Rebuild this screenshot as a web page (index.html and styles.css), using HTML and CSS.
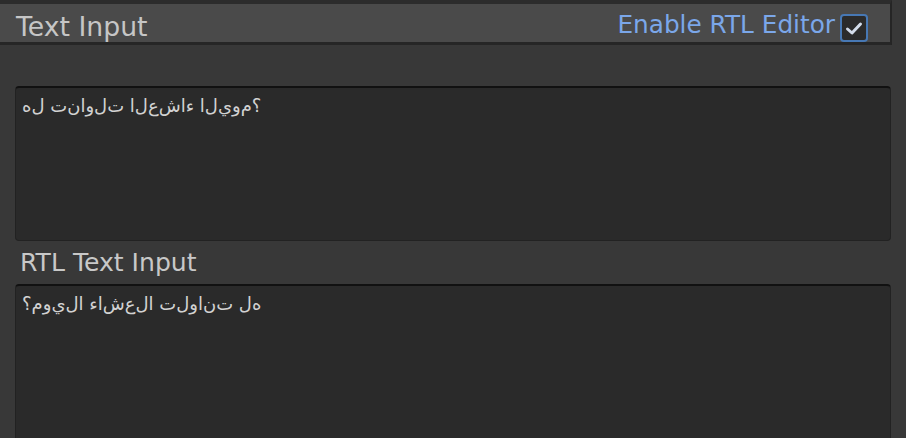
FILE: index.html
```html
<!DOCTYPE html>
<html lang="en">
<head>
<meta charset="utf-8">
<title>Text Input</title>
<link rel="stylesheet" href="styles.css">
</head>
<body>
<div class="panel">
  <header class="header">
    <span class="title">Text Input</span>
    <label class="toggle">
      <span class="toggle-label">Enable RTL Editor</span>
      <span class="checkbox">
        <svg width="18" height="15" viewBox="0 0 18 15"><polyline points="2.5,8 7,12 15.5,3" fill="none" stroke="#d3dcea" stroke-width="3" stroke-linecap="round" stroke-linejoin="round"/></svg>
      </span>
    </label>
  </header>
  <main class="content">
    <div class="field field-first">
      <div class="text ltr-raw">ه&zwnj;ل ت&zwnj;ن&zwnj;ا&zwnj;و&zwnj;ل&zwnj;ت ا&zwnj;ل&zwnj;ع&zwnj;ش&zwnj;ا&zwnj;ء ا&zwnj;ل&zwnj;ي&zwnj;و&zwnj;م&zwnj;؟</div>
    </div>
    <div class="field-label">RTL Text Input</div>
    <div class="field field-second">
      <div class="text ltr-raw">؟&zwnj;م&zwnj;و&zwnj;ي&zwnj;ل&zwnj;ا ء&zwnj;ا&zwnj;ش&zwnj;ع&zwnj;ل&zwnj;ا ت&zwnj;ل&zwnj;و&zwnj;ا&zwnj;ن&zwnj;ت ل&zwnj;ه</div>
    </div>
  </main>
</div>
</body>
</html>
```
FILE: styles.css
```css
html, body {
  margin: 0;
  padding: 0;
}
body {
  background: #383838;
  width: 906px;
  height: 438px;
  overflow: hidden;
  font-family: "DejaVu Sans", "Liberation Sans", sans-serif;
}
.panel {
  display: flex;
  flex-direction: column;
}
.header {
  width: 890px;
  height: 38px;
  background: #4a4a4a;
  border-top: 4px solid #2c2c2c;
  border-right: 2px solid #252525;
  border-bottom: 3px solid #262626;
  display: flex;
  align-items: flex-start;
  justify-content: space-between;
  box-sizing: content-box;
}
.title {
  padding: 8px 0 0 16px;
  font-size: 26.7px;
  line-height: 30px;
  color: #c6c6c6;
}
.toggle {
  display: flex;
  align-items: flex-start;
  gap: 5px;
  padding-right: 22px;
}
.toggle-label {
  padding-top: 6px;
  font-size: 24.75px;
  line-height: 30px;
  color: #7ba7e9;
}
.checkbox {
  width: 24px;
  height: 24px;
  margin-top: 10px;
  border: 2px solid #4778b4;
  border-radius: 4px;
  background: #2b2b2b;
  display: flex;
  align-items: center;
  justify-content: center;
}
.content {
  padding: 41px 15px 0 15px;
  display: flex;
  flex-direction: column;
}
.field {
  background: #2a2a2a;
  border: 1px solid #222222;
  border-top: 2px solid #111111;
  border-radius: 4px;
  box-sizing: border-box;
}
.field-first {
  height: 155px;
}
.field-second {
  height: 170px;
}
.text {
  padding: 4px 0 0 6px;
  font-size: 18px;
  line-height: 28px;
  color: #d2d2d2;
  text-align: left;
}
.ltr-raw {
  direction: ltr;
  unicode-bidi: bidi-override;
}
.field-label {
  height: 43px;
  padding-left: 5px;
  font-size: 25.1px;
  line-height: 43px;
  color: #c8c8c8;
}
```
